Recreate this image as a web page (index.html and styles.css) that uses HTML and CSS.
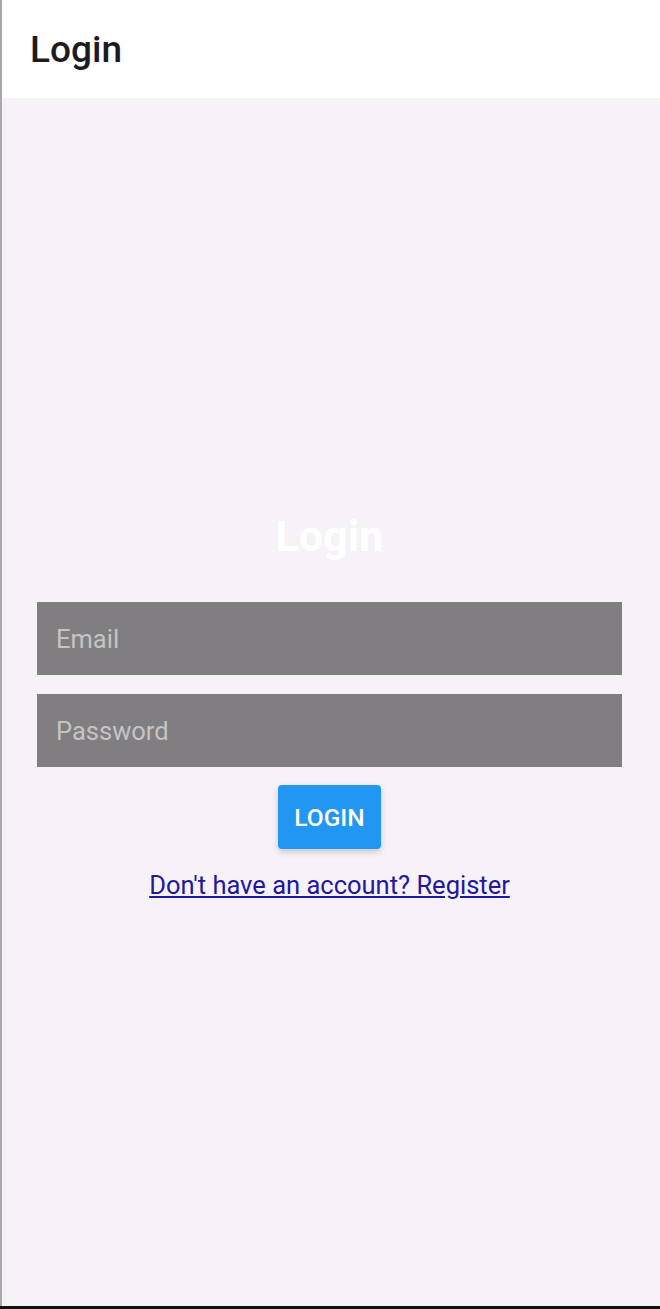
FILE: index.html
```html
<!DOCTYPE html>
<html lang="en">
<head>
    <meta charset="UTF-8">
    <meta name="viewport" content="width=device-width, initial-scale=1.0">
    <title>Login</title>
    <link rel="stylesheet" href="styles.css">
</head>
<body>
    <div class="screen">
        <header class="appbar">
            <h1>Login</h1>
        </header>
        <main class="content">
            <h2 class="form-title">Login</h2>
            <input class="field" type="email" placeholder="Email">
            <input class="field" type="password" placeholder="Password">
            <button class="login-btn">LOGIN</button>
            <a href="#register" class="register-link">Don't have an account? Register</a>
        </main>
    </div>
    <div class="navbar"></div>
</body>
</html>
```

FILE: styles.css
```css
body {
    font-family: Roboto, 'Noto Sans', sans-serif;
    margin: 0;
    padding: 0;
    background-color: #f7f2f7;
    height: 1309px;
    display: flex;
    flex-direction: column;
    overflow: hidden;
}
.screen {
    flex: 1;
    display: flex;
    flex-direction: column;
    border-left: 2px solid #a8a8a8;
}
.appbar {
    background: #fff;
    height: 98px;
    display: flex;
    align-items: center;
    padding-left: 28px;
}
.appbar h1 {
    margin: 0;
    font-size: 37px;
    font-weight: 500;
    color: #1d1b1e;
}
.content {
    display: flex;
    flex-direction: column;
    align-items: center;
    padding: 412px 38px 0 35px;
}
.form-title {
    margin: 0 0 40px;
    font-size: 43px;
    font-weight: 700;
    color: #fff;
    line-height: 52px;
}
.field {
    box-sizing: border-box;
    width: 100%;
    height: 73px;
    border: none;
    background: #807e80;
    padding: 0 19px;
    font-family: inherit;
    font-size: 25.5px;
    margin-bottom: 19px;
    outline: none;
}
.field::placeholder {
    color: #c4c4c4;
}
.login-btn {
    margin-top: -1px;
    width: 103px;
    height: 64px;
    border: none;
    border-radius: 4px;
    background: #2196f3;
    color: #fff;
    font-family: inherit;
    font-size: 24.5px;
    font-weight: 500;
    box-shadow: 0 3px 6px rgba(0, 0, 0, 0.18);
}
.register-link {
    margin-top: 21px;
    font-size: 25.5px;
    color: #22179e;
    text-decoration: underline;
}
.navbar {
    height: 3px;
    background: #111;
}
```
